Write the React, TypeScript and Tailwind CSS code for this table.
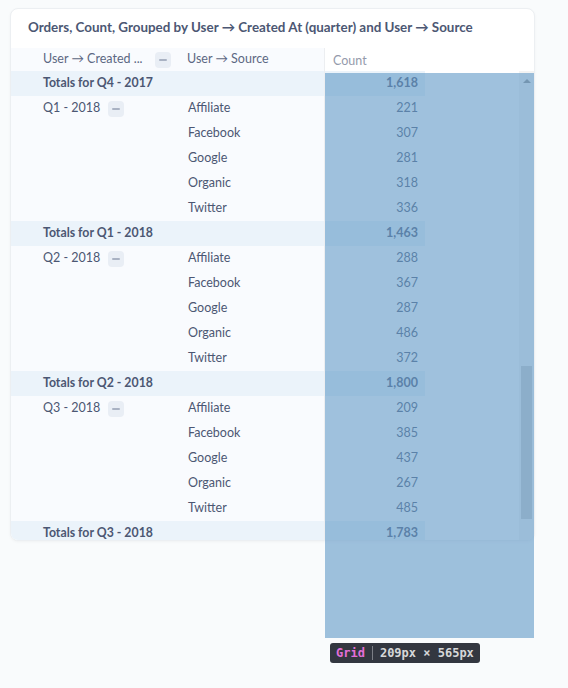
const sources = ['Affiliate', 'Facebook', 'Google', 'Organic', 'Twitter'];

const groups = [
  { q: 'Q1 - 2018', vals: [221, 307, 281, 318, 336], total: '1,463' },
  { q: 'Q2 - 2018', vals: [288, 367, 287, 486, 372], total: '1,800' },
  { q: 'Q3 - 2018', vals: [209, 385, 437, 267, 485], total: '1,783' },
];

function Minus() {
  return (
    <span className="w-4 h-4 rounded bg-[#e9eef5] flex items-center justify-center shrink-0">
      <span className="w-[8px] h-[2px] bg-[#a9b2c3] rounded-sm" />
    </span>
  );
}

function TotalLabel({ label }: { label: string }) {
  return (
    <div className="h-[25px] flex items-center pl-[32px] bg-[#ebf3fa] font-bold text-[#4c5773] text-[12.3px]">
      Totals for {label}
    </div>
  );
}

export default function App() {
  return (
    <div className="relative w-[568px] h-[688px] bg-[#f9fbfc] pt-[8px] pl-[10px] font-['Lato',sans-serif] text-[12.5px]">
      <div className="w-[525px] h-[533px] bg-white rounded-lg border border-[#eceff2] shadow-[0_1px_3px_rgba(0,0,0,0.04)] overflow-hidden flex flex-col">
        <div className="h-[39px] pl-[17px] flex items-center text-[13.4px] font-bold text-[#4c5773] pb-[3px]">
          Orders, Count, Grouped by User → Created At (quarter) and User → Source
        </div>
        <div className="flex flex-1 min-h-0">
          {/* row headers */}
          <div className="w-[313px] shrink-0 bg-[#f9fbfe] text-[#4c5773]">
            <div className="h-[23px] flex items-center">
              <div className="w-[176px] flex items-center justify-between pl-[32px] pr-[16px]">
                <span className="text-[#5c6883] whitespace-nowrap">User → Created ...</span>
                <Minus />
              </div>
              <span className="text-[#5c6883]">User → Source</span>
            </div>
            <TotalLabel label="Q4 - 2017" />
            {groups.map(g => (
              <div key={g.q}>
                <div className="flex">
                  <div className="w-[176px] h-[25px] flex items-center pl-[32px] gap-2">
                    <span>{g.q}</span>
                    <Minus />
                  </div>
                  <div className="flex flex-col pl-px">
                    {sources.map(s => (
                      <div key={s} className="h-[25px] flex items-center">{s}</div>
                    ))}
                  </div>
                </div>
                <TotalLabel label={g.q} />
              </div>
            ))}
          </div>
          <div className="w-px shrink-0 bg-[#eceef1]" />
          {/* values grid */}
          <div className="w-[209px] shrink-0 flex flex-col">
            <div className="h-[23px] flex items-center pl-[8px] pt-[3px] text-[#949aab]">Count</div>
            <div className="flex flex-1 min-h-0">
              <div className="w-[100px] text-[#4c5773]">
                <div className="h-[25px] flex items-center justify-end pr-[7px] bg-[#ebf3fa] font-bold">1,618</div>
                {groups.map(g => (
                  <div key={g.q}>
                    {g.vals.map((v, i) => (
                      <div key={i} className="h-[25px] flex items-center justify-end pr-[7px]">{v}</div>
                    ))}
                    <div className="h-[25px] flex items-center justify-end pr-[7px] bg-[#ebf3fa] font-bold">{g.total}</div>
                  </div>
                ))}
              </div>
              <div className="flex-1" />
              <div className="w-[15px] bg-[#f3f3f3] flex flex-col items-center">
                <div className="h-[19px] flex items-center justify-center">
                  <span className="w-0 h-0 border-l-[4px] border-r-[4px] border-b-[4px] border-l-transparent border-r-transparent border-b-[#8e8e8e]" />
                </div>
                <div className="mt-[276px] w-[11px] h-[153px] bg-[#cdcdcd]" />
              </div>
            </div>
          </div>
        </div>
      </div>

      {/* devtools grid highlight */}
      <div className="absolute left-[325px] top-[73px] w-[209px] h-[565px] bg-[rgba(100,155,200,0.62)] pointer-events-none" />
      <div className="absolute left-[330px] top-[643px] h-[20px] px-[6px] rounded-[3px] bg-[#333740] flex items-center gap-[7px] font-['DejaVu_Sans_Mono',monospace] font-bold text-[12px]">
        <span className="text-[#e36fd9]">Grid</span>
        <span className="w-px h-[14px] bg-[#7c7f86]" />
        <span className="text-[#d6d7d9]">209px × 565px</span>
      </div>
    </div>
  );
}
